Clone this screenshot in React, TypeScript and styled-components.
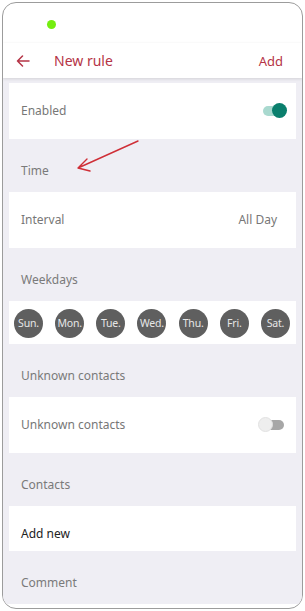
import styled, { createGlobalStyle } from "styled-components";

const GlobalStyle = createGlobalStyle`
  html, body {
    margin: 0;
    padding: 0;
    background: #ffffff;
  }
  body {
    font-family: "Noto Sans", "Open Sans", sans-serif;
  }
`;

const RED = "#b53446";

const Phone = styled.div`
  position: relative;
  box-sizing: border-box;
  margin: 2px 2px 0 2px;
  width: 301px;
  height: 607px;
  border: 1px solid #9c9c9c;
  border-radius: 14px;
  overflow: hidden;
  background: #ffffff;
  display: flex;
  flex-direction: column;
`;

const StatusBar = styled.div`
  height: 40px;
  flex: none;
  display: flex;
  align-items: flex-start;
  padding-left: 44px;
  box-sizing: border-box;
`;

const Camera = styled.div`
  width: 9px;
  height: 9px;
  border-radius: 50%;
  background: #74ee10;
  margin-top: 17px;
`;

const Header = styled.div`
  height: 35px;
  flex: none;
  display: flex;
  align-items: center;
  padding: 0 19px 0 13px;
  box-shadow: 0 1px 3px rgba(0, 0, 0, 0.12);
  position: relative;
  z-index: 1;
`;

const Title = styled.div`
  flex: 1;
  margin-left: 24px;
  color: ${RED};
  font-size: 14px;
`;

const HeaderAction = styled.div`
  color: ${RED};
  font-size: 13px;
`;

const Content = styled.div`
  flex: 1;
  background: #efeef4;
  padding: 5px 6px 0 6px;
  margin-bottom: 7px;
  display: flex;
  flex-direction: column;
`;

const Card = styled.div<{ $h: number; $top?: number }>`
  background: #ffffff;
  height: ${(p) => p.$h}px;
  box-sizing: border-box;
  padding: ${(p) => p.$top ?? 0}px 19px 0 12px;
  display: flex;
  align-items: ${(p) => (p.$top ? "flex-start" : "center")};
  justify-content: space-between;
  flex: none;
`;

const RowText = styled.div<{ $dark?: boolean }>`
  font-size: 12px;
  line-height: 18px;
  color: ${(p) => (p.$dark ? "#222222" : "#777777")};
`;

const SectionLabel = styled.div`
  height: 53px;
  box-sizing: border-box;
  padding: 23px 0 0 12px;
  font-size: 12px;
  line-height: 18px;
  color: #7a7a7a;
  flex: none;
`;

const DaysCard = styled.div`
  background: #ffffff;
  height: 43px;
  flex: none;
  display: flex;
  align-items: center;
  justify-content: space-between;
  padding: 1px 6px 0 5px;
  box-sizing: border-box;
`;

const Day = styled.div`
  width: 29px;
  height: 29px;
  border-radius: 50%;
  background: #5f5f5f;
  color: #e6e6e6;
  font-size: 10.5px;
  display: flex;
  align-items: center;
  justify-content: center;
  letter-spacing: -0.2px;
`;

const Switch = styled.div`
  position: relative;
  width: 29px;
  height: 16px;
  margin-right: -10px;
`;

const Track = styled.div<{ $on: boolean }>`
  position: absolute;
  left: 5px;
  right: 3px;
  top: 3px;
  height: 10px;
  border-radius: 5px;
  background: ${(p) => (p.$on ? "#a9d9cf" : "#a7a7a7")};
`;

const Thumb = styled.div<{ $on: boolean }>`
  position: absolute;
  top: 0;
  ${(p) => (p.$on ? "right: 0;" : "left: 0;")}
  width: 15px;
  height: 15px;
  border-radius: 50%;
  box-sizing: border-box;
  background: ${(p) => (p.$on ? "#0a7f6d" : "#eeeeee")};
  border: ${(p) => (p.$on ? "none" : "1px solid #e2e2e2")};
`;

const Annotation = styled.svg`
  position: absolute;
  left: 0;
  top: 0;
  pointer-events: none;
  z-index: 2;
`;

function Toggle({ on }: { on: boolean }) {
  return (
    <Switch>
      <Track $on={on} />
      <Thumb $on={on} />
    </Switch>
  );
}

const days = ["Sun.", "Mon.", "Tue.", "Wed.", "Thu.", "Fri.", "Sat."];

export default function App() {
  return (
    <>
      <GlobalStyle />
      <Phone>
        <StatusBar>
          <Camera />
        </StatusBar>
        <Header>
          <svg width="14" height="12" viewBox="0 0 14 12">
            <path
              d="M13 6H1.5M6.5 1L1.5 6l5 5"
              fill="none"
              stroke={RED}
              strokeWidth="1.5"
              strokeLinecap="round"
              strokeLinejoin="round"
            />
          </svg>
          <Title>New rule</Title>
          <HeaderAction>Add</HeaderAction>
        </Header>
        <Content>
          <Card $h={56}>
            <RowText>Enabled</RowText>
            <Toggle on />
          </Card>
          <SectionLabel>Time</SectionLabel>
          <Card $h={56}>
            <RowText>Interval</RowText>
            <RowText>All Day</RowText>
          </Card>
          <SectionLabel>Weekdays</SectionLabel>
          <DaysCard>
            {days.map((d) => (
              <Day key={d}>{d}</Day>
            ))}
          </DaysCard>
          <SectionLabel>Unknown contacts</SectionLabel>
          <Card $h={56}>
            <RowText>Unknown contacts</RowText>
            <Toggle on={false} />
          </Card>
          <SectionLabel>Contacts</SectionLabel>
          <Card $h={45} $top={19}>
            <RowText $dark>Add new</RowText>
          </Card>
          <SectionLabel>Comment</SectionLabel>
        </Content>
        <Annotation width="301" height="607" viewBox="0 0 301 607">
          <path
            d="M135 138L75 165M75 165L84 156M75 165L87 168"
            fill="none"
            stroke="#cf2f37"
            strokeWidth="1.4"
            strokeLinecap="round"
          />
        </Annotation>
      </Phone>
    </>
  );
}
